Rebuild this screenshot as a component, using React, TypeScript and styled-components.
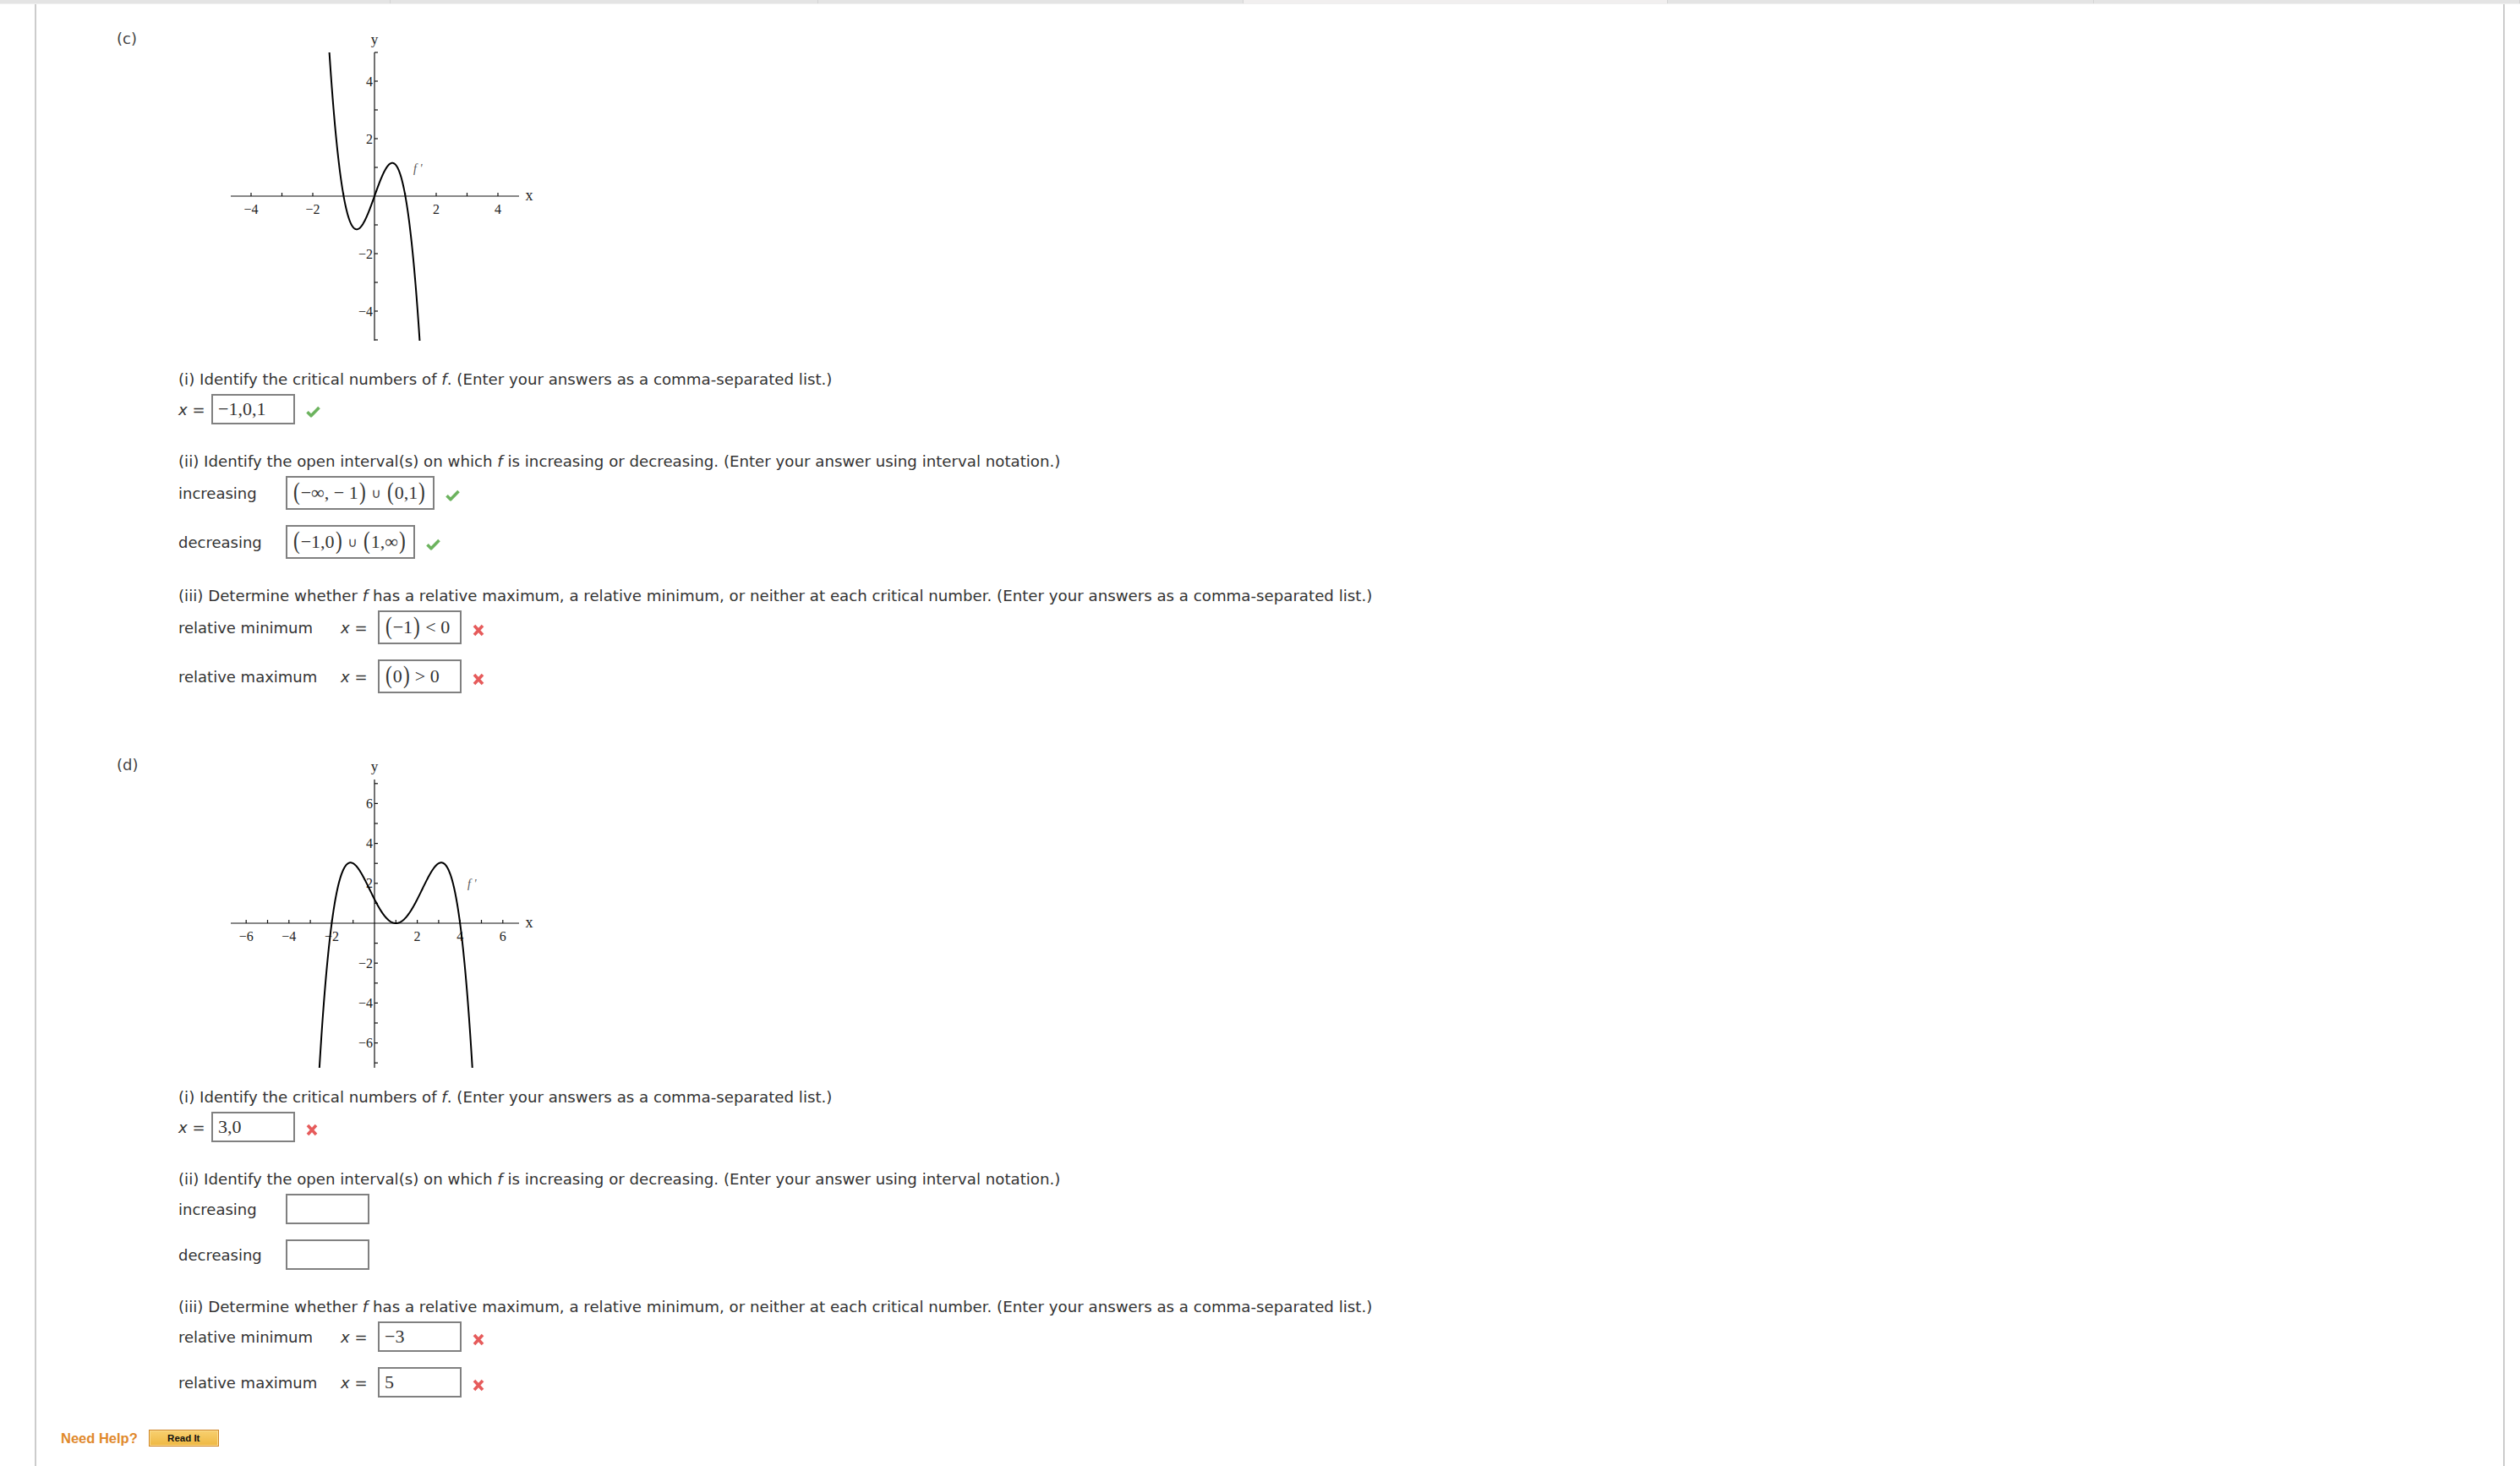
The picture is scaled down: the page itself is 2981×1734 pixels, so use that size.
import React from "react";
import styled, { createGlobalStyle } from "styled-components";

const GlobalStyle = createGlobalStyle`
  html, body {
    margin: 0;
    padding: 0;
    background: #fff;
  }
  body {
    font-family: "DejaVu Sans", Verdana, sans-serif;
    color: #333;
  }
`;

const Page = styled.div`
  display: flex;
  flex-direction: column;
  min-height: 1734px;
`;

const TabStrip = styled.div`
  display: flex;
  height: 4px;
  border-bottom: 1px solid #efefef;
`;

const Tab = styled.div<{ $w: number; $active?: boolean }>`
  width: ${(p) => p.$w}px;
  background: ${(p) => (p.$active ? "#f1efef" : "#e4e4e4")};
  border-right: 1px solid #d4d4d4;
  box-sizing: border-box;
`;

const Panel = styled.div`
  flex: 1;
  margin: 0 18px 0 41px;
  border-left: 2px solid #cccccc;
  border-right: 2px solid #cccccc;
  padding-top: 31px;
`;

const Part = styled.section`
  display: grid;
  grid-template-columns: 73px 1fr;
  padding-left: 95px;

  & + & {
    margin-top: 75px;
  }
`;

const PartLabel = styled.div`
  font-size: 18px;
  line-height: 20px;
  color: #444;
`;

const PartBody = styled.div`
  display: flex;
  flex-direction: column;
  align-items: flex-start;
`;

const GraphSvg = styled.svg<{ $mb: number }>`
  display: block;
  margin-bottom: ${(p) => p.$mb}px;
  overflow: visible;
`;

const Question = styled.div`
  & + & {
    margin-top: 34px;
  }
`;

const Prompt = styled.p`
  margin: 0 0 7px;
  font-size: 18.2px;
  line-height: 20px;
  white-space: nowrap;

  i {
    font-style: italic;
  }
`;

const Row = styled.div`
  display: flex;
  align-items: center;
  font-size: 18px;

  & + & {
    margin-top: 18px;
  }
`;

const RowLabel = styled.span<{ $w: number }>`
  width: ${(p) => p.$w}px;
  flex-shrink: 0;
`;

const XEq = styled.span<{ $w: number }>`
  width: ${(p) => p.$w}px;
  flex-shrink: 0;

  i {
    font-style: italic;
  }
`;

const AnswerBox = styled.span<{ $tall?: boolean }>`
  display: inline-flex;
  align-items: center;
  box-sizing: border-box;
  min-width: 99px;
  height: ${(p) => (p.$tall ? 40 : 36)}px;
  padding: 0 8px 0 6px;
  border: 2px solid #808080;
  font-family: "Liberation Serif", "Times New Roman", serif;
  font-size: 22px;
  color: #333;
  white-space: pre;
`;

const Paren = styled.span`
  font-size: 29px;
  line-height: 1;
  transform: scaleX(0.8);
  display: inline-block;
  margin-top: -3px;
`;

const Cup = styled.span`
  font-family: "DejaVu Sans", sans-serif;
  font-size: 16px;
  margin: 0 6px;
  color: #444;
`;

const Mark = styled.svg`
  margin: 6px 0 0 13px;
  flex-shrink: 0;
`;

const HelpRow = styled.div`
  display: flex;
  align-items: center;
  margin-top: 38px;
  padding-left: 29px;
`;

const NeedHelp = styled.span`
  font-family: "Liberation Sans", Arial, sans-serif;
  font-weight: bold;
  font-size: 16.5px;
  color: #e0892c;
`;

const ReadIt = styled.button`
  margin-left: 13px;
  width: 83px;
  height: 20px;
  padding: 0;
  border: 1px solid #cf8526;
  box-shadow: inset 0 0 0 1px #f9dc8e;
  background: linear-gradient(#f8d070, #efb842);
  font-family: "Liberation Sans", Arial, sans-serif;
  font-weight: bold;
  font-size: 11.5px;
  color: #111;
`;

const Check = () => (
  <Mark width="17" height="14" viewBox="0 0 17 14">
    <path d="M1.5 7.3 L6 11.8 L15.5 2" fill="none" stroke="#6cb35e" strokeWidth="3.6" strokeLinejoin="round" />
  </Mark>
);

const Cross = () => (
  <Mark width="14" height="15" viewBox="0 0 14 15">
    <path d="M2 2 L12 13 M12 2 L2 13" stroke="#e65b5b" strokeWidth="3.6" strokeLinecap="butt" />
  </Mark>
);

type GraphProps = {
  id: string;
  sx: number;
  sy: number;
  f: (x: number) => number;
  xLabels: number[];
  yLabels: number[];
  fAt: [number, number];
  yLabelY: number;
  oy: number;
  mb: number;
};

const fmt = (v: number) => (v < 0 ? `\u2212${-v}` : `${v}`);

const Graph: React.FC<GraphProps> = ({ id, sx, sy, f, xLabels, yLabels, fAt, yLabelY, oy, mb }) => {
  const ox = 232;
  const left = 62;
  const right = 403;
  const top = oy - 170;
  const bottom = oy + 171;

  const pts: string[] = [];
  for (let px = left; px <= right; px += 0.5) {
    const y = f((px - ox) / sx);
    const py = Math.max(-3000, Math.min(3000, oy - y * sy));
    pts.push(`${px.toFixed(1)},${py.toFixed(2)}`);
  }

  const xTicks: number[] = [];
  for (let i = Math.ceil((left - ox) / sx); i <= Math.floor((right - ox) / sx); i++) if (i !== 0) xTicks.push(i);
  const yTicks: number[] = [];
  for (let i = Math.ceil((oy - bottom) / sy); i <= Math.floor((oy - top) / sy + 0.02); i++) if (i !== 0) yTicks.push(i);

  return (
    <GraphSvg width="432" height="380" $mb={mb}>
      <defs>
        <clipPath id={id}>
          <rect x={left} y={top} width={right - left} height={bottom - top} />
        </clipPath>
      </defs>
      <g fontFamily='"Liberation Serif", "Times New Roman", serif' fill="#222">
        <text x={ox} y={yLabelY} fontSize="17" textAnchor="middle">y</text>
        <text x={ox + 183} y={oy + 5} fontSize="18" textAnchor="middle">x</text>
        {xLabels.map((v) => (
          <text key={`xl${v}`} x={ox + v * sx} y={oy + 21} fontSize="16" textAnchor="middle">
            {fmt(v)}
          </text>
        ))}
        {yLabels.map((v) => (
          <text key={`yl${v}`} x={ox - 2} y={oy - v * sy + 5.5} fontSize="16" textAnchor="end">
            {fmt(v)}
          </text>
        ))}
        <text x={fAt[0]} y={fAt[1]} fontSize="14" fontStyle="italic" fill="#555">
          f '
        </text>
      </g>
      <g stroke="#111" strokeWidth="1.2" fill="none">
        <line x1={left} y1={oy} x2={right} y2={oy} />
        <line x1={ox} y1={top} x2={ox} y2={bottom} />
        {xTicks.map((v) => (
          <line key={`xt${v}`} x1={ox + v * sx} y1={oy} x2={ox + v * sx} y2={oy - 4} />
        ))}
        {yTicks.map((v) => (
          <line key={`yt${v}`} x1={ox} y1={oy - v * sy} x2={ox + 4} y2={oy - v * sy} />
        ))}
      </g>
      <polyline clipPath={`url(#${id})`} points={pts.join(" ")} fill="none" stroke="#000" strokeWidth="2" strokeLinejoin="round" />
    </GraphSvg>
  );
};

const ITEXT = (
  <>
    (i) Identify the critical numbers of <i>f</i>. (Enter your answers as a comma-separated list.)
  </>
);
const IITEXT = (
  <>
    (ii) Identify the open interval(s) on which <i>f</i> is increasing or decreasing. (Enter your answer using interval notation.)
  </>
);
const IIITEXT = (
  <>
    (iii) Determine whether <i>f</i> has a relative maximum, a relative minimum, or neither at each critical number. (Enter your
    answers as a comma-separated list.)
  </>
);

const XLabel = ({ w }: { w: number }) => (
  <XEq $w={w}>
    <i>x</i> =
  </XEq>
);

type Ans = { value?: React.ReactNode; tall?: boolean; mark?: "ok" | "bad" };

const Answer: React.FC<Ans> = ({ value, tall, mark }) => (
  <>
    <AnswerBox $tall={tall}>{value}</AnswerBox>
    {mark === "ok" && <Check />}
    {mark === "bad" && <Cross />}
  </>
);

type PartData = {
  label: string;
  graph: GraphProps;
  crit: Ans;
  inc: Ans;
  dec: Ans;
  min: Ans;
  max: Ans;
};

const parts: PartData[] = [
  {
    label: "(c)",
    graph: {
      id: "clipc",
      sx: 36.5,
      sy: 34,
      f: (x) => 3 * x - 3 * x * x * x,
      xLabels: [-4, -2, 2, 4],
      yLabels: [4, 2, -2, -4],
      fAt: [278, 168],
      yLabelY: 16,
      oy: 196,
      mb: 23,
    },
    crit: { value: "\u22121,0,1", mark: "ok" },
    inc: {
      tall: true,
      mark: "ok",
      value: (
        <>
          <Paren>(</Paren>
          {"\u2212\u221E, \u2212 1"}
          <Paren>)</Paren>
          <Cup>{"\u222A"}</Cup>
          <Paren>(</Paren>
          {"0,1"}
          <Paren>)</Paren>
        </>
      ),
    },
    dec: {
      tall: true,
      mark: "ok",
      value: (
        <>
          <Paren>(</Paren>
          {"\u22121,0"}
          <Paren>)</Paren>
          <Cup>{"\u222A"}</Cup>
          <Paren>(</Paren>
          {"1,\u221E"}
          <Paren>)</Paren>
        </>
      ),
    },
    min: {
      tall: true,
      mark: "bad",
      value: (
        <>
          <Paren>(</Paren>
          {"\u22121"}
          <Paren>)</Paren>
          {" < 0"}
        </>
      ),
    },
    max: {
      tall: true,
      mark: "bad",
      value: (
        <>
          <Paren>(</Paren>
          {"0"}
          <Paren>)</Paren>
          {" > 0"}
        </>
      ),
    },
  },
  {
    label: "(d)",
    graph: {
      id: "clipd",
      sx: 25.3,
      sy: 23.6,
      f: (x) => -0.15 * (x + 2) * (x - 1) * (x - 1) * (x - 4),
      xLabels: [-6, -4, -2, 2, 4, 6],
      yLabels: [6, 4, 2, -2, -4, -6],
      fAt: [342, 155],
      yLabelY: 17,
      oy: 197,
      mb: 13,
    },
    crit: { value: "3,0", mark: "bad" },
    inc: {},
    dec: {},
    min: { value: "\u22123", mark: "bad" },
    max: { value: "5", mark: "bad" },
  },
];

const App: React.FC = () => {
  return (
    <Page>
      <GlobalStyle />
      <TabStrip>
        <Tab $w={462} />
        <Tab $w={506} />
        <Tab $w={503} />
        <Tab $w={502} $active />
        <Tab $w={504} />
        <Tab $w={504} />
      </TabStrip>
      <Panel>
        {parts.map((p) => (
          <Part key={p.label}>
            <PartLabel>{p.label}</PartLabel>
            <PartBody>
              <Graph {...p.graph} />
              <Question>
                <Prompt>{ITEXT}</Prompt>
                <Row>
                  <XLabel w={39} />
                  <Answer {...p.crit} />
                </Row>
              </Question>
              <Question>
                <Prompt>{IITEXT}</Prompt>
                <Row>
                  <RowLabel $w={127}>increasing</RowLabel>
                  <Answer {...p.inc} />
                </Row>
                <Row>
                  <RowLabel $w={127}>decreasing</RowLabel>
                  <Answer {...p.dec} />
                </Row>
              </Question>
              <Question>
                <Prompt>{IIITEXT}</Prompt>
                <Row>
                  <RowLabel $w={192}>relative minimum</RowLabel>
                  <XLabel w={44} />
                  <Answer {...p.min} />
                </Row>
                <Row>
                  <RowLabel $w={192}>relative maximum</RowLabel>
                  <XLabel w={44} />
                  <Answer {...p.max} />
                </Row>
              </Question>
            </PartBody>
          </Part>
        ))}
        <HelpRow>
          <NeedHelp>Need Help?</NeedHelp>
          <ReadIt>Read It</ReadIt>
        </HelpRow>
      </Panel>
    </Page>
  );
};

export default App;
